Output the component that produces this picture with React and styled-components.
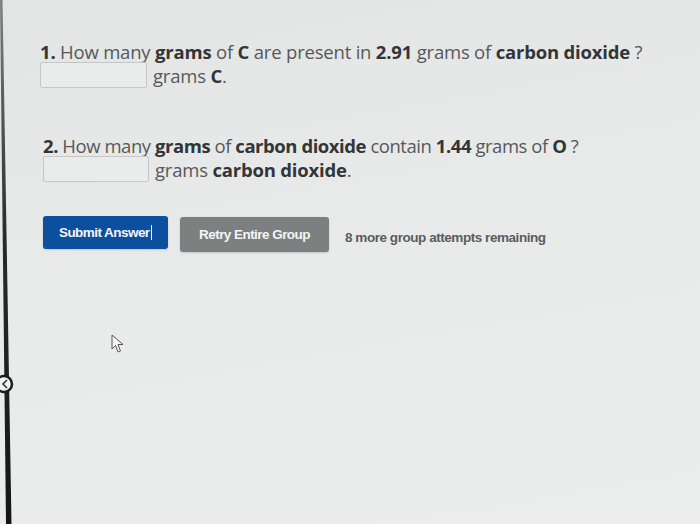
import React from "react";
import styled, { createGlobalStyle } from "styled-components";

const Global = createGlobalStyle`
  html, body { margin: 0; padding: 0; }
  body {
    width: 700px;
    height: 524px;
    overflow: hidden;
    background: linear-gradient(170deg, #e3e5e5 0%, #e8eaea 40%, #eceeed 100%);
    font-family: "Open Sans", "Liberation Sans", sans-serif;
  }
`;

const Screen = styled.div`
  position: relative;
  display: flex;
  width: 700px;
  height: 524px;
`;

const Bezel = styled.svg`
  position: absolute;
  left: 0;
  top: 0;
  width: 16px;
  height: 524px;
`;

const Content = styled.div`
  display: flex;
  flex-direction: column;
  padding: 41px 0 0 40px;
  color: #565859;
`;

const Question = styled.div`
  display: flex;
  flex-direction: column;
  margin-left: ${(p) => p.$indent || 0}px;
  margin-bottom: ${(p) => p.$mb || 0}px;
`;

const Prompt = styled.div`
  font-size: 18.5px;
  line-height: 21px;
  letter-spacing: ${(p) => p.$ls ?? -0.2}px;
  white-space: nowrap;
`;

const B = styled.b`
  font-weight: 700;
  color: #333536;
`;

const AnswerRow = styled.div`
  display: flex;
  align-items: center;
  gap: 6px;
  font-size: 18.5px;
  letter-spacing: -0.2px;
`;

const Input = styled.div`
  width: ${(p) => p.$w}px;
  height: 26px;
  border: 1px solid #c4c7c8;
  border-radius: 2px;
  background: #eaeceb;
  box-sizing: border-box;
`;

const Actions = styled.div`
  display: flex;
  align-items: center;
  gap: 12px;
  margin-left: 3px;
`;

const Button = styled.div`
  display: flex;
  align-items: center;
  justify-content: center;
  width: ${(p) => p.$w}px;
  height: ${(p) => p.$h}px;
  margin-top: ${(p) => p.$mt || 0}px;
  background: ${(p) => p.$bg};
  color: #f4f6f8;
  border-radius: 3px;
  font-family: "Liberation Sans", Arial, sans-serif;
  font-weight: 700;
  font-size: 13.5px;
  letter-spacing: -0.55px;
  box-shadow: 0 1px 2px rgba(0,0,0,0.15);
`;

const Caret = styled.span`
  display: inline-block;
  width: 1.5px;
  height: 15px;
  background: #f4f6f8;
  margin-left: 1px;
`;

const Remaining = styled.span`
  margin-left: 4px;
  margin-top: 9px;
  font-family: "Liberation Sans", Arial, sans-serif;
  font-weight: 700;
  font-size: 13.5px;
  letter-spacing: -0.45px;
  color: #5a5c5d;
`;

const Cursor = styled.svg`
  position: absolute;
  left: 111px;
  top: 334px;
  width: 14px;
  height: 20px;
`;

export default function App() {
  return (
    <>
      <Global />
      <Screen>
        <Bezel viewBox="0 0 16 524">
          <defs>
            <linearGradient id="edge" x1="0" y1="0" x2="0" y2="1">
              <stop offset="0" stopColor="#7f8182" />
              <stop offset="0.45" stopColor="#2a2a2a" />
              <stop offset="1" stopColor="#151515" />
            </linearGradient>
          </defs>
          <polygon points="0,0 2.5,0 11.5,524 6,524" fill="url(#edge)" />
          <circle cx="4" cy="384" r="8" fill="#f2f2f2" stroke="#1c1c1c" strokeWidth="2.5" />
          <path d="M7,380 L3,384 L7,388" fill="none" stroke="#333" strokeWidth="1.6" />
        </Bezel>
        <Content>
          <Question $mb={47}>
            <Prompt>
              <B>1.</B> How many <B>grams</B> of <B>C</B> are present in <B>2.91</B> grams of <B>carbon dioxide</B> ?
            </Prompt>
            <AnswerRow>
              <Input $w={107} />
              <span>grams <B>C</B>.</span>
            </AnswerRow>
          </Question>
          <Question $indent={3} $mb={31}>
            <Prompt $ls={-0.45}>
              <B>2.</B> How many <B>grams</B> of <B>carbon dioxide</B> contain <B>1.44</B> grams of <B>O</B> ?
            </Prompt>
            <AnswerRow>
              <Input $w={106} />
              <span>grams <B>carbon dioxide</B>.</span>
            </AnswerRow>
          </Question>
          <Actions>
            <Button $w={125} $h={33} $bg="#0c4f9e">
              Submit Answer<Caret />
            </Button>
            <Button $w={149} $h={35} $mt={4} $bg="#7d7f80">
              Retry Entire Group
            </Button>
            <Remaining>8 more group attempts remaining</Remaining>
          </Actions>
        </Content>
        <Cursor viewBox="0 0 14 20">
          <path d="M1,1 L1,15 L4.5,11.5 L7,18 L9.5,17 L7,10.5 L12,10.5 Z" fill="#f5f5f5" stroke="#555" strokeWidth="1" strokeLinejoin="round" />
        </Cursor>
      </Screen>
    </>
  );
}
